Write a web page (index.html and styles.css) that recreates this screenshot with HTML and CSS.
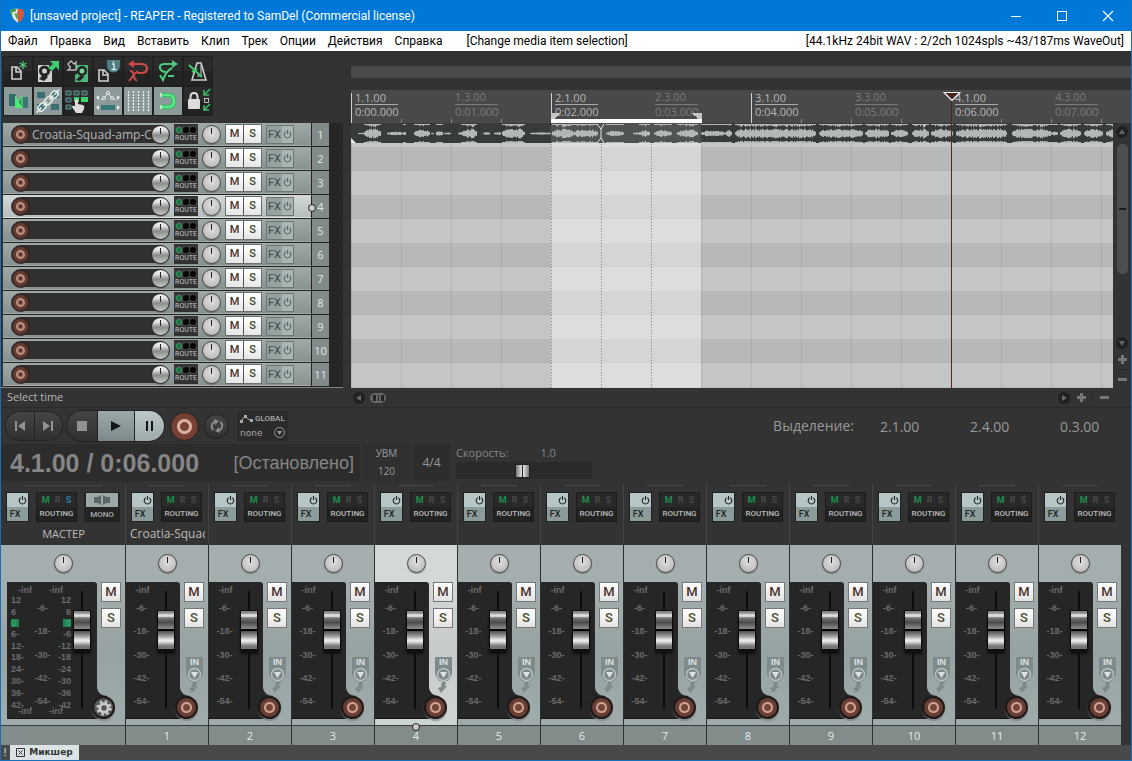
FILE: index.html
```html
<!DOCTYPE html>
<html lang="ru">
<head>
<meta charset="utf-8">
<title>[unsaved project] - REAPER</title>
<link rel="stylesheet" href="styles.css">
</head>
<body>
<div class="window">
  <header class="titlebar">
    <svg class="logo" width="16" height="16" viewBox="0 0 16 16"><path d="M1 2Q8-1 12 2L8 7Q9 11 9 15Q1 9 1 2Z" fill="#e9efe9"/><path d="M1 2Q5 0 8 1L6 4Q4 3 3 5Q3 8 5 11Q1 7 1 2Z" fill="#3d9a4e"/><path d="M9 1Q13 0 15 3Q16 9 10 15Q8 10 8 6Z" fill="#d9553c"/><path d="M5 5L9 6L8 12Z" fill="#4aa85a"/></svg>
    <h1 class="title">[unsaved project] - REAPER - Registered to SamDel (Commercial license)</h1>
    <div class="winbuttons">
      <button aria-label="Minimize"><svg width="12" height="12"><path d="M1 6.500H11" stroke="#fff"/></svg></button>
      <button aria-label="Maximize"><svg width="12" height="12"><rect x="1.500" y="1.500" width="9" height="9" fill="none" stroke="#fff"/></svg></button>
      <button aria-label="Close"><svg width="12" height="12"><path d="M1 1L11 11M11 1L1 11" stroke="#fff" stroke-width="1.200"/></svg></button>
    </div>
  </header>
  <nav class="menubar">
    <button>Файл</button><button>Правка</button><button>Вид</button><button>Вставить</button><button>Клип</button><button>Трек</button><button>Опции</button><button>Действия</button><button>Справка</button>
    <span class="last-action">[Change media item selection]</span>
    <span class="device">[44.1kHz 24bit WAV : 2/2ch 1024spls ~43/187ms WaveOut]</span>
  </nav>

  <main class="main">
    <section class="left">
      <div class="toolbar">
        <button aria-label="New project"><svg viewBox="0 0 28 28"><path d="M8 10H13L17 14V22H8ZM12 10V15H17" class="gl"/><path d="M19 4V12M15.500 6L22.500 10M22.500 6L15.500 10" stroke="#4fc97c" stroke-width="1.300"/></svg></button>
        <button aria-label="Open project"><svg viewBox="0 0 28 28"><path d="M4 8H15V14L18 14V25H4Z" fill="#d0d0d0"/><circle cx="10.500" cy="14" r="5.500" fill="#252525"/><circle cx="10.500" cy="14" r="2.500" fill="#d0d0d0"/><path d="M5 22L10 17L14 20L10 24Z" fill="#252525"/><path d="M16 4H25V13L22 10L18 14L14 11L19 7Z" fill="#3fce6f"/></svg></button>
        <button aria-label="Save project"><svg viewBox="0 0 28 28"><path d="M11 8H24V25H11V18L14 16Z" fill="#4cb878"/><circle cx="18" cy="14" r="5" fill="#252525"/><circle cx="18" cy="14" r="2.500" fill="#7fd29b"/><path d="M12 23L18 17L20 20L16 24Z" fill="#252525"/><path d="M4 7L7 4L10 7L12 5V13H4L6.500 10.500Z" fill="#252525" stroke="#bbb" stroke-width="1.300"/></svg></button>
        <button aria-label="Project settings"><svg viewBox="0 0 28 28"><path d="M5 13H10L14 17V24H5ZM9 13V18H14" class="gl"/><path d="M13 3H26V9A6.500 6.500 0 1 1 13 9Z" fill="#4d7f82"/><path d="M18 7H20V12M17.500 12.500H22.500M19.500 4V5.500" stroke="#d9e5e5" stroke-width="1.400" fill="none"/></svg></button>
        <button aria-label="Undo"><svg viewBox="0 0 28 28"><path d="M7 7H17Q23 7 23 11.500T17 16H13" fill="none" stroke="#c94a48" stroke-width="2.200"/><path d="M10 3L4 7L10 11Z" fill="#c94a48"/><path d="M6 14Q9 14 10 19T13 23M14 14Q11 16 9 19T5 24" fill="none" stroke="#c94a48" stroke-width="2"/></svg></button>
        <button aria-label="Redo"><svg viewBox="0 0 28 28"><path d="M21 7H11Q5 7 6 11T12 15" fill="none" stroke="#4fc97c" stroke-width="2.200"/><path d="M18 3L24 7L18 11Z" fill="#4fc97c"/><path d="M6 18L9 23Q12 14 18 11M14 19H20" fill="none" stroke="#4fc97c" stroke-width="2"/></svg></button>
        <button aria-label="Metronome"><svg viewBox="0 0 28 28"><path d="M13 6H17L22 23H8Z" class="gl"/><path d="M13 19H17L17 8" stroke="#d0d0d0" fill="none"/><path d="M5 8L18 20M8 15L13 12" stroke="#3fce6f" stroke-width="2"/></svg></button>
        <button class="on" aria-label="Auto-crossfade"><svg viewBox="0 0 28 28"><path d="M5 7H12V19H5Z" fill="#326b6c"/><path d="M17 10H24V21H17Z" fill="#3d7778"/><path d="M11 8L18 21H11Z" fill="#4bea74"/><path d="M18 9V21L14 15Z" fill="#2f8f55" stroke="#54f580"/></svg></button>
        <button class="on" aria-label="Item grouping"><svg viewBox="0 0 28 28"><path d="M3 5H11V11H3ZM17 5H25V11H17ZM3 17H11V23H3ZM17 17H25V23H17Z" fill="#3a6e70"/><g transform="rotate(-45 14 14)" fill="none" stroke="#e4eaea" stroke-width="1.600"><rect x="1" y="11" width="9" height="6" rx="3"/><rect x="10" y="11" width="9" height="6" rx="3"/><rect x="19" y="11" width="8" height="6" rx="3"/><path d="M-2 14H5M23 14H30M7 14H13M16 14H22"/></g></svg></button>
        <button aria-label="Ripple editing"><svg viewBox="0 0 28 28"><path d="M2 4H7V8H2ZM10 4H15V8H10ZM18 4H23V8H18ZM2 11H7V15H2ZM2 18H7V22H2Z" fill="#2b4c4c" stroke="#66918f"/><path d="M10 10H15V15H10ZM17 10H24V15H17Z" fill="#39d26b"/><path d="M11 13Q13 11 14 13V17L19 18Q21 19 20 22L18 26H12L8 20Q8 18 11 19Z" fill="#ddd"/></svg></button>
        <button class="on" aria-label="Move envelopes"><svg viewBox="0 0 28 28"><path d="M7 18H21V23H7Z" fill="#37797b"/><path d="M7 13L10 11L14 6L18 11L22 13" fill="none" stroke="#eee"/><g fill="#8e9c9a" stroke="#eee"><circle cx="10" cy="11" r="1.500"/><circle cx="14" cy="6" r="1.500"/><circle cx="18" cy="11" r="1.500"/></g><path d="M5 8V13L2 10.500ZM23 8V13L26 10.500ZM5 18V23L2 20.500ZM23 18V23L26 20.500Z" fill="#eee"/></svg></button>
        <button class="on" aria-label="Grid"><svg viewBox="0 0 28 28"><path d="M4.500 4V25M9.500 4V25M14.500 4V25M19.500 4V25M24.500 4V25" stroke="#eef2f2" stroke-width="1.200" stroke-dasharray="2 1"/></svg></button>
        <button class="on" aria-label="Snap"><svg viewBox="0 0 28 28"><path d="M7 8H14Q20 8 20 14T14 20H7" fill="none" stroke="#36c566" stroke-width="4.500"/><path d="M7 8H14Q20 8 20 14T14 20H7" fill="none" stroke="#67f592" stroke-width="1.500"/><path d="M6 6H8V10H6ZM6 18H8V22H6Z" fill="#b9e8c6"/></svg></button>
        <button aria-label="Locking"><svg viewBox="0 0 28 28"><rect x="4" y="12" width="12" height="10" rx="1" fill="#ddd"/><path d="M6.500 12V10Q6.500 6 10 6T13.500 10V12" fill="none" stroke="#ddd" stroke-width="2"/><path d="M20 3V8H25M20 8L26 2M20 18V23H25M20 23L26 17" fill="none" stroke="#39c068" stroke-width="1.500"/><rect x="20.500" y="11.500" width="4" height="4" fill="none" stroke="#bbb"/></svg></button>
      </div>
      <div class="tcp" id="tcp"></div>
    </section>

    <section class="arrange">
      <div class="overview"></div>
      <div class="ruler" id="ruler"></div>
      <div class="canvas-row">
        <div class="canvas">
          <div class="lanes"></div>
          <div class="time-selection"></div>
          <svg class="item" id="wave" width="100%" height="21"></svg>
        </div>
        <div class="vscroll">
          <button class="round" aria-label="Up"><svg width="12" height="12"><path d="M3 8L6 3L9 8Z"/></svg></button>
          <div class="vtrack"><div class="vthumb"></div></div>
          <button class="round" aria-label="Down"><svg width="12" height="12"><path d="M3 4L6 9L9 4Z"/></svg></button>
          <button class="plain" aria-label="Zoom in vertically"><svg width="9" height="9"><path d="M3 0H6V3H9V6H6V9H3V6H0V3H3Z"/></svg></button>
          <hr>
          <button class="plain" aria-label="Zoom out vertically"><svg width="9" height="9"><path d="M0 3H9V6H0Z"/></svg></button>
        </div>
      </div>
      <div class="loop"></div>
      <div class="cursor"><svg width="18" height="11" viewBox="0 0 18 11"><path d="M1 1.500H17L9 9.500Z" fill="#4a2424" stroke="#fff" stroke-width="1.200"/></svg></div>
    </section>
  </main>

  <div class="statusrow">
    <span class="status">Select time</span>
    <div class="hscroll">
      <button class="round" aria-label="Left"><svg width="12" height="12"><path d="M8 3L3 6L8 9Z"/></svg></button>
      <button class="grip" aria-label="Scroll"><svg width="16" height="10"><path d="M6 2V8H3V2ZM9 2V8H8V2ZM14 2V8H11V2Z" fill="#222"/></svg></button>
      <span class="spacer"></span>
      <button class="round" aria-label="Right"><svg width="12" height="12"><path d="M4 3L9 6L4 9Z"/></svg></button>
      <button class="plain" aria-label="Zoom in"><svg width="9" height="9"><path d="M3 0H6V3H9V6H6V9H3V6H0V3H3Z"/></svg></button>
      <i class="sep"></i>
      <button class="plain" aria-label="Zoom out"><svg width="9" height="9"><path d="M0 3H9V6H0Z"/></svg></button>
    </div>
  </div>

  <section class="transport">
    <div class="trow">
      <div class="pill">
        <button aria-label="Go to start"><svg width="14" height="12"><path d="M2 1V11H4V1ZM12 1V11L5 6Z"/></svg></button>
        <button aria-label="Go to end"><svg width="14" height="12"><path d="M10 1V11H12V1ZM2 1V11L9 6Z"/></svg></button>
      </div>
      <div class="pill big">
        <button class="stop" aria-label="Stop"><svg width="10" height="10"><path d="M0 0H10V10H0Z"/></svg></button>
        <button class="play" aria-label="Play"><svg width="12" height="12"><path d="M1 1V11L11 6Z"/></svg></button>
        <button class="pause" aria-label="Pause"><svg width="12" height="12"><path d="M2 1H4V11H2ZM7 1H9V11H7Z"/></svg></button>
      </div>
      <button class="record" aria-label="Record"></button>
      <button class="repeat" aria-label="Repeat"><svg width="16" height="16" viewBox="0 0 16 16"><path d="M4.500 12A5 5 0 0 1 6 3.500M11.500 4A5 5 0 0 1 10 12.500" fill="none" stroke="#8b8b8b" stroke-width="2"/><path d="M5 1L10 3L6 7ZM11 15L6 13L10 9Z" fill="#8b8b8b"/></svg></button>
      <div class="global">
        <span class="glabel"><svg width="13" height="9"><path d="M1 7L5 2L8 5L12 7" fill="none" stroke="#aaa"/><path d="M0 6H3V9H0ZM4 1H7V4H4ZM10 5H13V8H10Z" fill="#aaa"/></svg>GLOBAL</span>
        <span class="gmode"><select aria-label="Automation override"><option>none</option></select><svg width="11" height="11"><circle cx="5.500" cy="5.500" r="5" fill="none" stroke="#999"/><path d="M3 4H8L5.500 8Z" fill="#999"/></svg></span>
      </div>
      <div class="selection"><label for="s1">Выделение:</label><input id="s1" value="2.1.00"><input aria-label="Конец" value="2.4.00"><input aria-label="Длина" value="0.3.00"></div>
    </div>
    <div class="trow second">
      <div class="clock"><span class="time">4.1.00 / 0:06.000</span><span class="state">[Остановлено]</span></div>
      <div class="bpm"><label for="bpm">УВМ</label><input id="bpm" value="120"></div>
      <button class="sig">4/4</button>
      <div class="rate"><div class="ratetext"><label for="rate">Скорость:</label><span>1.0</span></div><input id="rate" type="range" min="0" max="100" value="49"></div>
    </div>
  </section>

  <section class="mixer" id="mixer"></section>

  <footer class="dock"><span class="bang">!</span><button class="tab"><svg width="9" height="9"><path d="M.5.5H8.500V8.500H.5ZM2.500 2.500L6.500 6.500M6.500 2.500L2.500 6.500" fill="none" stroke="#333"/></svg>Микшер</button></footer>
</div>
<script src="app.js"></script>
</body>
</html>
```
FILE: app.js
```js
const power = '<svg width="9" height="9" viewBox="0 0 9 9"><path d="M2.800 1.800A3.300 3.300 0 1 0 6.200 1.800M4.500 0V4" fill="none" stroke="currentColor" stroke-width="1.100"/></svg>';

const tcp = document.getElementById('tcp');
for (let i = 1; i <= 11; i++) {
  const name = i === 1 ? 'Croatia-Squad-amp-C' : '';
  tcp.insertAdjacentHTML('beforeend', `
  <div class="track${i === 4 ? ' selected' : ''}">
    <div class="panel">
      <button class="arm" aria-label="Arm ${i}"></button>
      <input class="name" aria-label="Track name ${i}" value="${name}">
      <button class="knob vol" aria-label="Volume ${i}"></button>
      <button class="route"><span><i></i><i></i><i></i></span>ROUTE</button>
      <button class="knob" aria-label="Pan ${i}"></button>
      <div class="ms"><button>M</button><button>S</button></div>
      <div class="fx"><button>FX</button><button aria-label="Bypass ${i}">${power}</button></div>
    </div>
    <span class="num">${i}</span>
    <span class="meter"></span>
  </div>`);
}

const ruler = document.getElementById('ruler');
for (let i = 0; i < 8; i++) {
  const minor = i % 2;
  ruler.insertAdjacentHTML('beforeend', `<div class="mark${minor ? ' minor' : ''}"><span>${(i >> 1) + 1}.${minor ? 3 : 1}.00</span><span>0:0${i}.000</span></div>`);
}

/* Loudness of the clip: [start px, end px, amplitude] */
const bursts = [[7,13,1],[13,30,5],[36,52,2],[52,55,4],[63,79,4],[80,83,1],[85,92,4],[93,100,1.5],[107,111,2],[110,126,5],[132,139,2],[143,150,2],[151,174,5],[179,200,1.3],[201,222,5],[222,247,4],[255,273,3],[282,288,1.5],[288,299,4],[303,321,3.5],[326,347,4],[350,374,3],[374,381,5],[384,465,5],[468,512,4.5],[514,538,5],[540,557,4],[561,578,5],[580,602,5],[605,656,5],[661,700,5],[700,707,3],[709,730,5],[733,752,4.5],[755,900,5]];
let seed = 7;
const rnd = () => (seed = (seed * 16807) % 2147483647) / 2147483647;
let d = '';
for (const [a, b, amp] of bursts) {
  for (let x = a; x < b; x++) {
    const env = Math.min(1, .4 + Math.min(x - a, b - x) / 8);
    const h = Math.max(.6, amp * env * (.55 + rnd() * .45));
    d += `M${x + .5} ${10.5 - h}V${10.5 + h}`;
    if (amp > 2.5) {
      const t = Math.max(1, (h - 1.4) * (.6 + rnd() * .4));
      d += `M${x + .5} 1V${1 + t}M${x + .5} 20V${20 - Math.min(t, 2)}`;
    }
  }
}
document.getElementById('wave').innerHTML =
  `<rect width="100%" height="20" fill="#373b3b"/><rect x="200" width="150" height="20" fill="#505353"/><path d="${d}" stroke="#b3b8b7"/>
   <path d="M0 15V20H5Z" fill="#eee"/><path d="M246 1L250 6V15L246 20M253 1L250 6M253 20L250 15" fill="none" stroke="#e6e9e8"/>`;

const well = w => `<svg class="well" width="${w + 14}" height="137"><path d="M0 0H${w - 3}Q${w} 0 ${w} 3V106Q${w + 1} 113 ${w + 10} 114V130L${w} 137H0Z" fill="#262626"/><path d="M0 137H${w}" stroke="#161616" stroke-width="2"/></svg>`;
const scale = '<div class="scale"><span>-inf</span><span>-6-</span><span>-18-</span><span>-30-</span><span>-42-</span><span>-54-</span></div>';
const side = n => `<div class="side"><button class="sq">M</button><button class="sq s">S</button>${n ? '<button class="in" aria-label="Input"><span>IN</span><svg width="18" height="25" viewBox="0 0 18 25"><path d="M0 0H17V6L13 13H4L0 6Z" fill="#7f8a8a"/><path d="M7 13L11 14L10 18H12L6 25L3 20L6 19Z" fill="#7f8a8a"/><circle cx="8.500" cy="6.500" r="6" fill="#7f8a8a" stroke="#bcc5c5" stroke-width="1.300"/><path d="M5 4H12L8.500 10Z" fill="#dde3e3"/></svg></button>' : ''}</div>`;
const routing = '<button class="routing"><span class="mrs"><b>M</b><b>R</b><b>S</b></span>ROUTING</button>';
const fxb = `<div class="mfx"><button aria-label="Bypass">${power}</button><button>FX</button></div>`;
const fader = l => `<input class="fader" type="range" min="0" max="100" value="72" aria-label="${l}">`;
const gear = '<svg width="18" height="18" viewBox="-9 -9 18 18"><circle r="4.200" fill="none" stroke="#c9c9c9" stroke-width="3"/><circle r="6.500" fill="none" stroke="#c9c9c9" stroke-width="2.400" stroke-dasharray="2.550 2.550"/></svg>';

const mixer = document.getElementById('mixer');
const db = (cls, vals) => `<div class="db ${cls}">${vals.map(v => `<span>${v}</span>`).join('')}</div>`;
mixer.insertAdjacentHTML('beforeend', `
<div class="strip master">
  <div class="head"><hr><div class="hb">${fxb}${routing}<button class="mono"><svg width="32" height="14" viewBox="0 0 32 14"><path d="M0 0H32V14H0Z" fill="#9aa8a8"/><path d="M8 4H12L15 2V12L12 10H8ZM24 4H20L17 2V12L20 10H24Z" fill="#59676a"/></svg>MONO</button></div><span class="sname">МАСТЕР</span></div>
  <div class="body"><button class="knob" aria-label="Master pan"></button>
    <div class="fz">${well(90)}${db('l', ['12','6','0','6-','12-','18-','24-','30-','36-','42-'])}${scale}${db('r', ['12','6','0','-6','-12','-18','-24','-30','-36','-42'])}<span class="inf">-inf</span><span class="inf two">-inf</span>${fader('Master volume')}${side(0)}<button class="recm gear" aria-label="Settings">${gear}</button></div>
  </div>
  <div class="foot"></div>
</div>`);
for (let i = 1; i <= 12; i++) {
  mixer.insertAdjacentHTML('beforeend', `
  <div class="strip${i === 4 ? ' selected' : ''}">
    <div class="head"><hr><div class="hb">${fxb}${routing}</div><span class="sname">${i === 1 ? 'Croatia-Squad' : ''}</span></div>
    <div class="body"><button class="knob" aria-label="Pan ${i}"></button>
      <div class="fz">${well(54)}${scale}${fader('Volume ' + i)}${side(1)}<button class="recm" aria-label="Arm ${i}"></button></div>
    </div>
    <div class="foot">${i}</div>
  </div>`);
}
```
FILE: styles.css
```css
* { box-sizing: border-box; }
body { margin: 0; font: 11px/14px "Open Sans", "Noto Sans", sans-serif; background: #333; }
button, input, select { font: inherit; color: inherit; border: 0; padding: 0; margin: 0; background: none; border-radius: 0; min-width: 0; }
button { display: flex; align-items: center; justify-content: center; flex: none; }
svg { flex: none; display: block; }
hr { border: 0; margin: 0; }
.window { height: 100vh; display: flex; flex-direction: column; border: 1px solid #1a70b8; border-top: 0; background: #333; overflow: hidden; color: #aaa; }
.window > * { flex: none; }

.titlebar { height: 31px; background: #0078d7; color: #fff; display: flex; align-items: center; padding-left: 8px; gap: 5px; }
.title { font: 400 12px/16px Roboto, sans-serif; margin: 0; flex: 1; white-space: nowrap; }
.winbuttons { display: flex; }
.winbuttons button { width: 46px; height: 31px; }
.menubar { height: 20px; background: #fff; color: #000; display: flex; align-items: center; gap: 12px; padding: 0 7px; font: 12px/16px Roboto, sans-serif; white-space: nowrap; }
.last-action { margin-left: 12px; }
.device { margin-left: auto; }

.window > .main { flex: 1; min-height: 0; display: flex; }
.left { width: 350px; flex: none; display: flex; flex-direction: column; }
.toolbar { height: 72px; padding: 6px 0 0 3px; display: grid; grid-template-columns: repeat(7, 28px); grid-auto-rows: 28px; gap: 2px; }
.toolbar button { background: linear-gradient(#2b2b2b 50%, #232323 50%); outline: 1px solid #202020; }
.toolbar .on { background: #8c9b99; }
.toolbar svg { width: 28px; height: 28px; }
.gl { fill: none; stroke: #cfcfcf; stroke-width: 1.6; }

.tcp { padding-left: 2px; flex: 1; min-height: 0; overflow: hidden; width: 342px; border-bottom: 1px solid #858585; }
.track { height: 24px; display: flex; border-bottom: 1px solid #222; }
.panel { width: 308px; display: flex; align-items: center; background: linear-gradient(#a0aaa9, #87918f); border-bottom: 1px solid #a5adac; padding-left: 8px; }
.selected .panel { background: linear-gradient(#d3d9d8, #b7bdbc); border-color: #dfe4e3; }
.num { width: 18px; background: #808b8a; border-left: 1px solid #222; color: #e3e8e7; text-align: center; line-height: 23px; }
.meter { width: 14px; background: #262626; }
.arm { width: 19px; height: 19px; border-radius: 50%; background: radial-gradient(#4e302b 1px, #bc8d7e 3px 4px, #5f3932 5px 7px, #412a27 8px); border: 1px solid #2c2220; position: relative; z-index: 1; }
.name { width: 140px; height: 18px; background: #303030; margin-left: -9px; padding: 0 8px 0 11px; color: #b5b5b5; font-size: 12px; }
.knob { width: 19px; height: 19px; border-radius: 50%; border: 1px solid #4c4c4c; background: linear-gradient(#222, #222) 50% 2px / 1px 6px no-repeat, radial-gradient(circle at 50% 40%, #e0e0e0, #bcbcbc 75%); box-shadow: 0 1px 1px #5558; }
.panel .vol { background: linear-gradient(#222, #222) 50% 2px / 1px 6px no-repeat, linear-gradient(#e8e8e8 20%, #8d8d8d 55%, #c6c6c6); border-color: #222; margin-left: -10px; }
.route { width: 24px; height: 20px; background: #323232; color: #c6c6c6; font: 7px/9px Roboto, sans-serif; flex-direction: column; margin: 0 4px; }
.route span { display: flex; gap: 1px; background: #404040; width: 22px; height: 8px; align-items: center; justify-content: center; }
.route i { width: 6px; height: 6px; border-radius: 50%; background: #000; }
.route i:first-child { background: #1c6b3d; border: 1px solid #35a566; }
.ms { display: flex; gap: 1px; margin-left: 4px; background: #555; border: 1px solid #66706f; width: 37px; height: 20px; }
.ms button { flex: 1; background: linear-gradient(#fff, #e6e6e6); color: #47302c; font: 500 11px/18px Roboto, sans-serif; }
.ms button + button { color: #40432c; }
.fx { margin-left: 4px; display: flex; width: 28px; height: 19px; border: 1px solid #6b7776; background: #93a19f; color: #3d4a49; }
.fx button { flex: 1; font: 11px/17px Roboto, sans-serif; }
.fx button + button { flex: 0 0 11px; background: #a9b5b3; color: #566; }
.track.selected { position: relative; }
.track.selected::after { content: ""; position: absolute; left: 305px; top: 9px; width: 6px; height: 6px; border: 1px solid #222; border-radius: 50%; background: #ccc; }

.arrange { flex: 1; min-width: 0; position: relative; display: flex; flex-direction: column; }
.overview { height: 12px; margin-top: 15px; background: #494949; flex: none; }
.ruler { height: 33px; margin-top: 12px; flex: none; background: repeating-linear-gradient(90deg, #888 0 1px, transparent 1px 50px) 0 100% / 100% 4px no-repeat, #494949; display: flex; overflow: hidden; }
.mark { width: 100px; flex: none; height: 33px; margin-top: 3px; padding-left: 3px; border-left: 1px solid #d0d0d0; color: #b7b7b7; line-height: 14px; }
.mark span { display: block; width: 43px; white-space: nowrap; }
.mark span:first-child { border-bottom: 1px solid #aaa; line-height: 10px; height: 12px; }
.mark.minor { color: #7b7b7b; border-color: transparent; }
.mark.minor span:first-child { border-color: #7b7b7b; line-height: 8px; }
.canvas-row { flex: 1; min-height: 0; display: flex; }
.canvas { flex: 1; min-width: 0; position: relative; overflow: hidden; }
.lanes { height: 100%; background: repeating-linear-gradient(90deg, #8884 0 1px, transparent 1px 50px), repeating-linear-gradient(#c4c6c5 0 24px, #b7b9b8 24px 47px, #acafae 47px 48px); }
.item { position: absolute; left: 0; top: 0; }
.time-selection {
  --dots: repeating-linear-gradient(#8c8e8d 0 1px, transparent 1px 3px);
  position: absolute; left: 200px; top: 0; bottom: 0; width: 150px;
  background: var(--dots) 0 0 / 1px 100% no-repeat, var(--dots) 50px 0 / 1px 100% no-repeat, var(--dots) 100px 0 / 1px 100% no-repeat, #ffffff68;
}
.vscroll { width: 18px; flex: none; background: #333; display: flex; flex-direction: column; align-items: center; padding: 3px 0 2px; gap: 2px; }
.round { width: 12px; height: 12px; border-radius: 50%; background: #202020; }
.round path { fill: #666; }
.plain { width: 12px; height: 16px; }
.plain path { fill: #777; }
.vscroll .plain:last-child { height: 14px; }
.vscroll hr { width: 8px; height: 1px; background: #222; }
.vtrack { flex: 1; width: 11px; padding-top: 4px; }
.vthumb { height: 68%; border-radius: 5px; background: linear-gradient(#1c1c1c, #1c1c1c) 50% 50% / 7px 2px no-repeat, #4e4e4e; }
.loop { position: absolute; left: 200px; top: 62px; width: 151px; height: 10px; background: linear-gradient(#fff, #fff) 0 100% / 100% 4px no-repeat, linear-gradient(135deg, #c5c5c5 50%, transparent 50%) 0 0 / 10px 10px no-repeat, linear-gradient(225deg, #c5c5c5 50%, transparent 50%) 100% 0 / 10px 10px no-repeat; }
.cursor { position: absolute; left: 600px; top: 40px; bottom: 0; width: 1px; background: #5c2323; }
.cursor svg { position: absolute; left: -8px; top: 0; }

.statusrow { height: 20px; display: flex; border-bottom: 1px solid #2b2b2b; }
.status { width: 350px; padding: 2px 6px; color: #b5b5b5; }
.hscroll { flex: 1; display: flex; align-items: center; gap: 5px; padding: 0 21px 0 2px; }
.spacer { flex: 1; }
.sep { width: 1px; height: 8px; background: #222; }
.grip { width: 16px; height: 10px; border-radius: 5px; background: #666; }

.transport { height: 76px; color: #999; }
.trow { display: flex; align-items: center; height: 36px; padding-left: 5px; }
.pill { display: flex; gap: 1px; width: 56px; height: 28px; border-radius: 14px; overflow: hidden; background: #222; box-shadow: 0 0 0 1px #232323; }
.pill button { flex: 1; background: linear-gradient(#454545, #303030); }
.pill path { fill: #929292; }
.pill.big { width: 97px; height: 30px; border-radius: 15px; margin-left: 5px; }
.pill .stop { flex: 0 0 30px; }
.pill .play { flex: 0 0 36px; background: linear-gradient(#9ba9ab, #7c8a8c); }
.pill .pause { background: linear-gradient(#bdc8ca, #9daaac); }
.pill .play path, .pill .pause path { fill: #161616; }
.record { width: 29px; height: 29px; border-radius: 50%; margin-left: 6px; border: 1px solid #222; background: radial-gradient(circle, #7a4236 4px, #d9b0a1 5px 7px, #7a4236 8px, #673a30); }
.repeat { width: 25px; height: 25px; border-radius: 50%; margin-left: 5px; border: 1px solid #212121; background: linear-gradient(#454545, #303030); }
.global { width: 51px; height: 30px; margin-left: 8px; padding: 1px 3px; background: #2b2b2b; }
.glabel { display: flex; gap: 2px; align-items: center; height: 13px; font: 500 8px/13px Roboto, sans-serif; color: #aaa; }
.gmode { display: flex; align-items: center; justify-content: space-between; color: #aaa; font: 9px/14px "DejaVu Sans", sans-serif; height: 15px; }
.gmode select { appearance: none; width: 30px; }
.selection { margin-left: auto; display: flex; align-items: center; gap: 26px; font-size: 14px; padding-right: 7px; }
.selection label { line-height: 20px; }
.selection input { width: 64px; height: 20px; }
.second { height: 37px; padding: 0; align-items: stretch; gap: 2px; }
.clock { width: 359px; background: #2c2c2c; display: flex; align-items: center; justify-content: space-between; padding: 0 6px 0 9px; font: 18px/36px "Liberation Sans", Arial, sans-serif; color: #858585; }
.time { font-weight: 700; font-size: 25px; }
.bpm { width: 49px; background: #303030; display: flex; flex-direction: column; align-items: center; font-size: 10px; line-height: 18px; }
.bpm input { width: 40px; text-align: center; height: 18px; }
.sig { width: 37px; background: #2d2d2d; font-size: 12px; }
.rate { width: 136px; font-size: 11px; margin-left: 4px; }
.ratetext { display: flex; gap: 32px; height: 18px; line-height: 18px; color: #858585; }
.rate input { appearance: none; display: block; width: 136px; height: 17px; background: #2a2a2a; }
.rate input::-webkit-slider-thumb { appearance: none; width: 15px; height: 14px; background: linear-gradient(90deg, #777, #e0e0e0 45%, #222 45% 52%, #eee 52%, #777); border: 1px solid #222; }

.mixer { height: 261px; display: flex; overflow: hidden; }
.strip { width: 83px; flex: none; display: flex; flex-direction: column; }
.strip.master { width: 124px; }
.head { height: 61px; border-left: 1px solid #454545; display: flex; flex-direction: column; }
.master .head, .master .body { border-left: 0; }
.head hr { width: 36px; height: 1px; background: #484848; margin: 1px auto 6px; }
.master .head hr { width: 78px; }
.hb { display: flex; gap: 7px; padding-left: 5px; }
.mfx { width: 23px; height: 30px; border: 1px solid #1c2222; background: linear-gradient(#b6c5c5 50%, #8c9c9b 50%); color: #1c2222; font: 500 9px/14px Roboto, sans-serif; }
.mfx button { height: 14px; width: 12px; margin-left: 2px; }
.mfx button:first-child { margin-left: 9px; }
.routing { width: 41px; height: 30px; background: #222; border: 1px solid #1c1c1c; flex-direction: column; font: 500 8px/14px Roboto, sans-serif; color: #bbb; }
.mrs { display: flex; justify-content: space-around; width: 100%; padding: 0 2px; background: #292929; color: #484848; font-size: 9px; line-height: 14px; }
.mrs b:first-child { color: #1d8c4c; }
.master .mrs b:last-child { color: #2e7d9e; }
.mono { width: 36px; height: 30px; background: #232323; flex-direction: column; font: 500 8px/15px Roboto, sans-serif; color: #aaa; }
.sname { height: 23px; line-height: 24px; overflow: hidden; white-space: nowrap; margin: 0 3px 0 4px; color: #bcbcbc; font-size: 12px; }
.master .sname { text-align: center; font-size: 11px; }
.body { height: 181px; border-left: 1px solid #2a2f2f; border-bottom: 1px solid #333b3b; background: linear-gradient(#a4aeae 20%, #97a2a2 60%, #a0abab); padding-top: 9px; }
.strip.selected .body { background: linear-gradient(#d4d8d8 20%, #c6caca 60%, #cfd4d4); }
.body > .knob { margin: 0 auto; }
.fz { position: relative; margin-top: 9px; height: 137px; display: flex; }
.well { position: absolute; left: 0; top: 0; }
.master .fz { margin-left: 6px; }
.scale, .db { position: relative; font: 700 9px/10px "Liberation Sans", Arial, sans-serif; color: #6b6b6b; display: flex; flex-direction: column; }
.scale { width: 31px; padding: 3px 0 13px; justify-content: space-between; align-items: center; }
.scale span:first-child { margin-bottom: -5px; margin-left: 2px; }
.db { width: 16px; padding: 13px 0 9px; justify-content: space-between; margin-left: 4px; }
.db.r { text-align: right; margin: 0; width: 13px; }
.db span:nth-child(3) { background: #1f8450; color: #38a36c; height: 8px; width: 8px; line-height: 8px; }
.db.r span:nth-child(3) { align-self: flex-end; }
.master .scale span:first-child { visibility: hidden; }
.inf { position: absolute; left: 11px; top: 3px; font: 700 9px/10px "Liberation Sans", Arial, sans-serif; color: #6b6b6b; }
.inf.two { left: 42px; }
.inf::after { content: "-inf"; position: absolute; left: 0; top: 121px; }
.fader { appearance: none; writing-mode: vertical-lr; direction: rtl; position: relative; width: 18px; height: 130px; margin: 3px 0 0 0; background: linear-gradient(#0c0c0c, #0c0c0c) 50% 50% / 2px 118px no-repeat; }
.master .fader { margin-left: 2px; }
.fader::-webkit-slider-thumb { appearance: none; width: 18px; height: 40px; border: 1px solid #0c0c0c; background: linear-gradient(#888 0 5%, #ddd 10% 14%, #777 18%, #4a4a4a 30%, #8a8a8a 46%, #000 48% 52%, #555 54%, #999 66%, #e8e8e8 76% 80%, #777 92%); box-shadow: 0 4px 2px #111; }
.side { margin-left: auto; width: 20px; margin-right: 4px; display: flex; flex-direction: column; gap: 6px; }
.side .sq { width: 20px; height: 20px; background: linear-gradient(#fff, #e3e3e3); border: 1px solid #777; color: #4a322c; font: 500 13px/18px Roboto, sans-serif; }
.side .s { color: #4c4c2c; }
.in { flex-direction: column; width: 17px; margin: 23px 0 0 2px; color: #dde3e3; font: 700 9px/11px "Liberation Sans", Arial, sans-serif; }
.in span { background: #7f8a8a; width: 17px; }
.recm { position: absolute; right: 10px; bottom: 0; width: 23px; height: 23px; border-radius: 50%; border: 2px solid #1e1a19; background: radial-gradient(circle, #74463a 3px, #cfa193 4px 5px, #6c4036 6px, #5a362e); box-shadow: 0 2px 1px #7778; }
.recm.gear { background: #555; }
.foot { height: 19px; background: #818c8b; border-left: 1px solid #2a2f2f; color: #e6ebea; text-align: center; line-height: 19px; }
.master .foot { border-left: 0; }
.strip.selected { position: relative; }
.strip.selected .foot::before { content: ""; position: absolute; left: 38px; top: 239px; width: 6px; height: 6px; border-radius: 50%; border: 1px solid #222; background: #ccc; }

.dock { height: 15px; background: #494949; display: flex; font: 700 10px/15px "DejaVu Sans", sans-serif; color: #ddd; }
.bang { width: 9px; padding-left: 2px; font-weight: 400; }
.tab { width: 69px; background: #dbe3e3; color: #333; gap: 4px; font: 700 9px/15px "DejaVu Sans", sans-serif; }
```
